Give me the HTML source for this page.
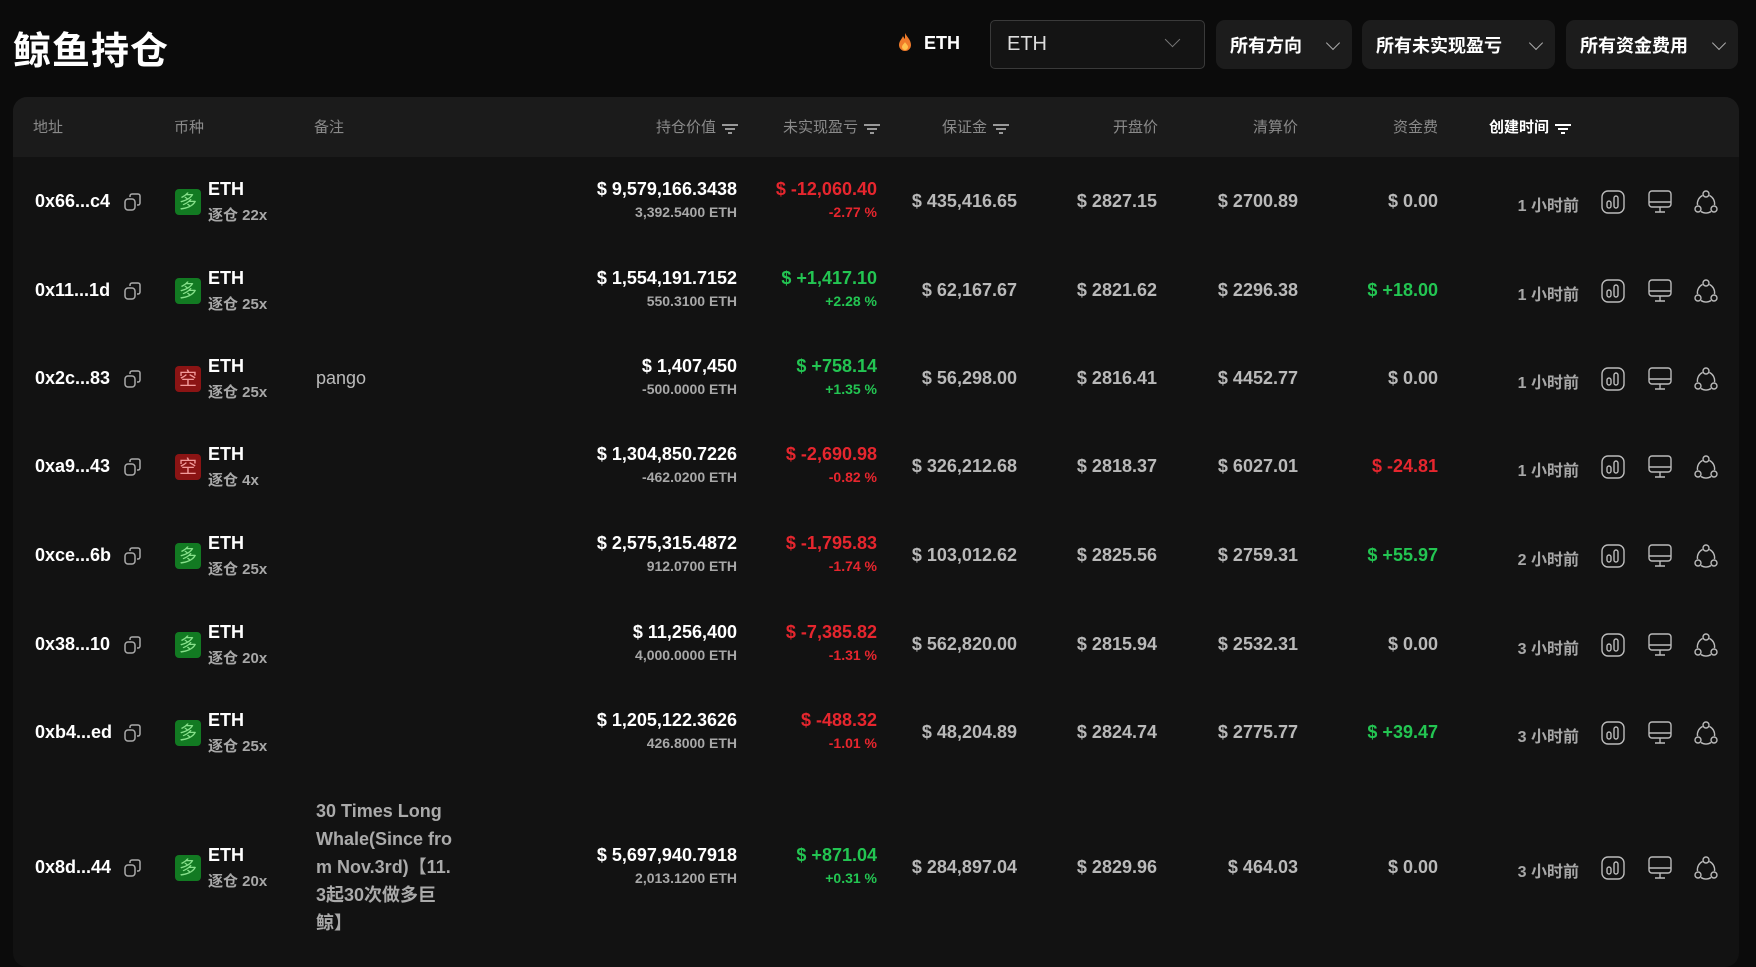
<!DOCTYPE html>
<html><head><meta charset="utf-8"><style>
*{margin:0;padding:0;box-sizing:border-box}
body{width:1756px;height:954px;background:#0b0b0b;font-family:"Liberation Sans","Noto Sans CJK SC",sans-serif;color:#fff;position:relative;overflow:hidden}
.a{position:absolute;white-space:nowrap}
.t{left:13px;top:20px;font-size:38px;font-weight:bold;letter-spacing:1px}
.btn{top:20px;height:49px;background:#1c1c1c;border-radius:9px;font-size:18px;font-weight:bold;display:flex;align-items:center;padding-left:14px}
.chev{position:absolute;right:14px;top:18px;width:10px;height:10px;border-right:1.5px solid #aaa;border-bottom:1.5px solid #aaa;transform:rotate(45deg)}
.tbl{left:13px;top:97px;width:1726px;height:870px;background:#121212;border-radius:14px;overflow:hidden}
.hd{left:0;top:0;width:1726px;height:60px;background:#1b1b1b}
.h{font-size:15px;color:#8a8a8a;top:19px}
.r{text-align:right;width:260px}
.f{display:inline-block;vertical-align:middle;margin-left:6px;width:16px;height:12px;position:relative}
.f i{position:absolute;left:0;height:1.6px;background:#999}
.addr{left:35px;font-size:18px;font-weight:bold}
.badge{width:26px;height:26px;border-radius:4px;font-size:18px;text-align:center;line-height:26px;font-weight:normal}
.L{background:#127a22;color:#86e08a}.S{background:#8b1414;color:#f39a9a}
.m{font-size:18px;font-weight:bold}
.s{font-size:14px;font-weight:bold;color:#a8a8a8}
.tm{font-size:16px;font-weight:bold;color:#a8a8a8}
.g{color:#b9b9b9}
.red{color:#e6262e}.grn{color:#23c552}
</style></head><body>
<div class="a t">鲸鱼持仓</div>
<svg class="a" style="left:898px;top:32px" width="14" height="20" viewBox="0 0 14 20"><path d="M7 1C9 5 13 8 13 13a6 6 0 0 1-12 0C1 9 4 7 5 4c1 2 2 3 2 3z" fill="#f07b2a"/><path d="M7 10c1 2 3 3 3 5a3 3 0 0 1-6 0c0-2 2-3 3-5z" fill="#ffc04d"/></svg>
<div class="a" style="left:924px;top:33px;font-size:18px;font-weight:bold">ETH</div>
<div class="a" style="left:990px;top:20px;width:215px;height:49px;background:#141414;border:1px solid #3a3a3a;border-radius:5px;font-size:20px;color:#ddd;padding:12px 0 0 16px">ETH<div class="chev" style="right:26px;top:13px;width:11px;height:11px;border-color:#777"></div></div>
<div class="a btn" style="left:1216px;width:136px">所有方向<div class="chev"></div></div>
<div class="a btn" style="left:1362px;width:193px">所有未实现盈亏<div class="chev"></div></div>
<div class="a btn" style="left:1566px;width:172px">所有资金费用<div class="chev"></div></div>

<div class="a tbl">
<div class="a hd"></div>
<div class="a h" style="left:20px">地址</div>
<div class="a h" style="left:161px">币种</div>
<div class="a h" style="left:301px">备注</div>
<div class="a h r" style="left:465px">持仓价值<span class="f"><i style="top:2px;width:16px"></i><i style="top:6px;left:3px;width:10px"></i><i style="top:10px;left:6px;width:4px"></i></span></div>
<div class="a h r" style="left:607px">未实现盈亏<span class="f"><i style="top:2px;width:16px"></i><i style="top:6px;left:3px;width:10px"></i><i style="top:10px;left:6px;width:4px"></i></span></div>
<div class="a h r" style="left:736px">保证金<span class="f"><i style="top:2px;width:16px"></i><i style="top:6px;left:3px;width:10px"></i><i style="top:10px;left:6px;width:4px"></i></span></div>
<div class="a h r" style="left:885px">开盘价</div>
<div class="a h r" style="left:1025px">清算价</div>
<div class="a h r" style="left:1165px">资金费</div>
<div class="a h" style="left:1476px;color:#fff;font-weight:bold">创建时间<span class="f"><i style="top:2px;width:16px;background:#fff"></i><i style="top:6px;left:3px;width:10px;background:#fff"></i><i style="top:10px;left:6px;width:4px;background:#fff"></i></span></div>
</div>

<div id="rows"></div>
<script>
const R=[
["0x66...c4","L","22x","","$ 9,579,166.3438","3,392.5400 ETH","red","$ -12,060.40","-2.77 %","$ 435,416.65","$ 2827.15","$ 2700.89","g","$ 0.00",1,202],
["0x11...1d","L","25x","","$ 1,554,191.7152","550.3100 ETH","grn","$ +1,417.10","+2.28 %","$ 62,167.67","$ 2821.62","$ 2296.38","grn","$ +18.00",1,291],
["0x2c...83","S","25x","pango","$ 1,407,450","-500.0000 ETH","grn","$ +758.14","+1.35 %","$ 56,298.00","$ 2816.41","$ 4452.77","g","$ 0.00",1,379],
["0xa9...43","S","4x","","$ 1,304,850.7226","-462.0200 ETH","red","$ -2,690.98","-0.82 %","$ 326,212.68","$ 2818.37","$ 6027.01","red","$ -24.81",1,467],
["0xce...6b","L","25x","","$ 2,575,315.4872","912.0700 ETH","red","$ -1,795.83","-1.74 %","$ 103,012.62","$ 2825.56","$ 2759.31","grn","$ +55.97",2,556],
["0x38...10","L","20x","","$ 11,256,400","4,000.0000 ETH","red","$ -7,385.82","-1.31 %","$ 562,820.00","$ 2815.94","$ 2532.31","g","$ 0.00",3,645],
["0xb4...ed","L","25x","","$ 1,205,122.3626","426.8000 ETH","red","$ -488.32","-1.01 %","$ 48,204.89","$ 2824.74","$ 2775.77","grn","$ +39.47",3,733],
["0x8d...44","L","20x","N","$ 5,697,940.7918","2,013.1200 ETH","grn","$ +871.04","+0.31 %","$ 284,897.04","$ 2829.96","$ 464.03","g","$ 0.00",3,868]];
const copy='<svg width="20" height="20" viewBox="0 0 20 20" fill="none" stroke="#aaa" stroke-width="1.5"><rect x="2" y="7" width="10" height="11" rx="3"/><path d="M7 5V4a2 2 0 0 1 2-2h6a2 2 0 0 1 2 2v7a2 2 0 0 1-2 2h-1"/></svg>';
const ic='<svg width="26" height="26" viewBox="0 0 26 26" fill="none" stroke="#bbb" stroke-width="1.4"><rect x="2" y="2" width="22" height="22" rx="6"/><rect x="7" y="12" width="4" height="7" rx="2"/><rect x="14" y="7" width="4" height="12" rx="2"/></svg>';
const mon='<svg width="26" height="26" viewBox="0 0 26 26" fill="none" stroke="#bbb" stroke-width="1.4"><rect x="2" y="2" width="22" height="16" rx="3"/><path d="M2 13h22M13 18v5M8 23h10"/></svg>';
const sh='<svg width="26" height="26" viewBox="0 0 26 26" fill="none" stroke="#bbb" stroke-width="1.4"><circle cx="13" cy="5" r="3"/><circle cx="5" cy="20" r="3"/><circle cx="21" cy="20" r="3"/><path d="M9.5 6.5a9 9 0 0 0-5 9.5M16.5 6.5a9 9 0 0 1 5 9.5M8 22.5a9 9 0 0 0 10 0"/></svg>';
let h='';
for(const r of R){const c=r[15];const rt=(x,w,html,top,cls)=>`<div class="a ${cls}" style="left:${x-w}px;width:${w}px;text-align:right;top:${top}px">${html}</div>`;
h+=`<div class="a addr" style="top:${c-11}px">${r[0]}</div>`;
h+=`<div class="a" style="left:123px;top:${c-10}px">${copy}</div>`;
h+=`<div class="a badge ${r[1]}" style="left:175px;top:${c-13}px">${r[1]=='L'?'多':'空'}</div>`;
h+=`<div class="a m" style="left:208px;top:${c-23}px">ETH</div><div class="a s" style="left:208px;top:${c+2}px;font-size:15px">逐仓 ${r[2]}</div>`;
if(r[3]=='pango')h+=`<div class="a" style="left:316px;top:${c-11}px;font-size:18px;color:#bbb">pango</div>`;
if(r[3]=='N')h+=`<div class="a" style="left:316px;top:${c-71}px;font-size:18px;color:#aaa;line-height:28px;font-weight:bold">30 Times Long<br>Whale(Since fro<br>m Nov.3rd)【11.<br>3起30次做多巨<br>鲸】</div>`;
h+=rt(737,300,r[4],c-23,'m')+rt(737,300,r[5],c+2,'s');
h+=rt(877,200,r[7],c-23,'m '+r[6])+rt(877,200,r[8],c+2,'s '+r[6]);
h+=rt(1017,200,r[9],c-11,'m g')+rt(1157,200,r[10],c-11,'m g')+rt(1298,200,r[11],c-11,'m g')+rt(1438,200,r[13],c-11,'m '+r[12]);
h+=rt(1579,200,r[14]+' 小时前',c-10,'tm');
h+=`<div class="a" style="left:1600px;top:${c-13}px">${ic}</div><div class="a" style="left:1647px;top:${c-13}px">${mon}</div><div class="a" style="left:1693px;top:${c-13}px">${sh}</div>`;}
document.getElementById('rows').innerHTML=h;
</script>
</body></html>
